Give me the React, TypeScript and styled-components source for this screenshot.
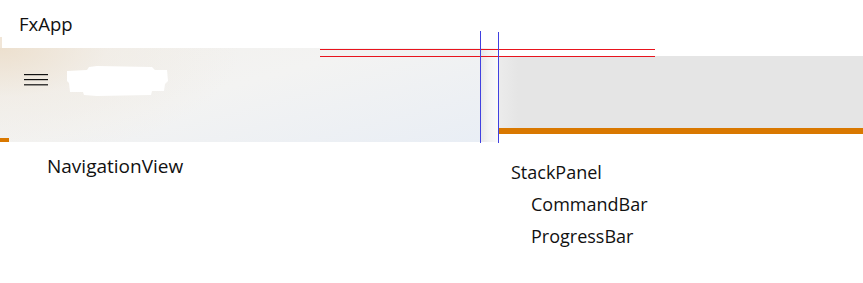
import React from 'react'
import styled, { createGlobalStyle } from 'styled-components'

const GlobalStyle = createGlobalStyle`
  html, body {
    margin: 0;
    padding: 0;
    background: #ffffff;
  }
  body {
    font-family: "Open Sans", "Noto Sans", sans-serif;
    color: #111111;
  }
`

const Stage = styled.div`
  position: relative;
  width: 863px;
  height: 283px;
  overflow: hidden;
`

const TitleBar = styled.div`
  height: 48px;
  line-height: 47px;
  padding-left: 19px;
  font-size: 18.5px;
`

const Shell = styled.div`
  display: flex;
  height: 94px;
`

const NavPane = styled.div`
  position: relative;
  width: 480px;
  display: flex;
  flex-direction: column;
  background:
    radial-gradient(ellipse 240px 110px at 0% 0%, rgba(236, 222, 203, 0.9) 0%, rgba(240, 233, 223, 0.45) 45%, rgba(243, 242, 240, 0) 100%),
    linear-gradient(165deg, #f2f0ec 0%, #f3f3f2 45%, #e9eef5 100%);

  &::before {
    content: '';
    position: absolute;
    left: 0;
    top: -11px;
    width: 2px;
    height: 11px;
    background: #f1e6d8;
  }
`

const NavHeader = styled.div`
  height: 64px;
  display: flex;
  align-items: center;
  gap: 19px;
  padding-left: 24px;
`

const PaneFooter = styled.div`
  margin-top: auto;
  display: flex;
`

const Indicator = styled.div`
  width: 9px;
  height: 4px;
  background: #d97800;
`

const Shadow = styled.div`
  width: 18px;
  background: linear-gradient(90deg, #e6e6e6 0%, #f3f3f3 50%, #fafafa 100%);
`

const Content = styled.div`
  flex: 1;
  display: flex;
  flex-direction: column;
  padding-top: 8px;
`

const CommandBar = styled.div`
  height: 72px;
  background: linear-gradient(90deg, #ececec 0px, #e5e5e5 20px, #e5e5e5 100%);
`

const ProgressBar = styled.div`
  height: 6px;
  background: #d97800;
`

const Labels = styled.div`
  display: grid;
  grid-template-columns: 498px 1fr;
  font-size: 18px;
  line-height: 32px;
`

const LeftLabel = styled.div`
  padding: 8px 0 0 47px;
  font-size: 19px;
`

const Tree = styled.div`
  padding: 14px 0 0 13px;
`

const Child = styled.div`
  padding-left: 20px;
`

const HLine = styled.div<{ $top: number }>`
  position: absolute;
  left: 320px;
  top: ${(p) => p.$top}px;
  width: 335px;
  height: 1px;
  background: #e8141e;
`

const VLine = styled.div<{ $left: number; $top: number }>`
  position: absolute;
  left: ${(p) => p.$left}px;
  top: ${(p) => p.$top}px;
  width: 1px;
  height: ${(p) => 143 - p.$top}px;
  background: #4040e0;
`

const Hamburger = () => (
  <svg width="24" height="12" viewBox="0 0 24 12">
    <g stroke="#111" strokeWidth="1.2">
      <line x1="0" y1="0.6" x2="24" y2="0.6" />
      <line x1="0" y1="5.6" x2="24" y2="5.6" />
      <line x1="0" y1="10.8" x2="24" y2="10.8" />
    </g>
  </svg>
)

const Blur = () => (
  <svg width="102" height="32" viewBox="0 0 102 32" style={{ marginTop: 3 }}>
    <path
      d="M0 5 L20 4 L22 1 L30 0 L85 1 L88 4 L100 4 L101 15 L98 18 L97 25 L85 25 L84 29 L30 30 L17 29 L16 26 L3 26 L2 17 L0 15 Z"
      fill="#ffffff"
    />
  </svg>
)

const App = () => {
  return (
    <Stage>
      <GlobalStyle />
      <TitleBar>FxApp</TitleBar>
      <Shell>
        <NavPane>
          <NavHeader>
            <Hamburger />
            <Blur />
          </NavHeader>
          <PaneFooter>
            <Indicator />
          </PaneFooter>
        </NavPane>
        <Shadow />
        <Content>
          <CommandBar />
          <ProgressBar />
        </Content>
      </Shell>
      <Labels>
        <LeftLabel>NavigationView</LeftLabel>
        <Tree>
          <div>StackPanel</div>
          <Child>CommandBar</Child>
          <Child>ProgressBar</Child>
        </Tree>
      </Labels>
      <HLine $top={49} />
      <HLine $top={56} />
      <VLine $left={480} $top={31} />
      <VLine $left={498} $top={32} />
    </Stage>
  )
}

export default App
